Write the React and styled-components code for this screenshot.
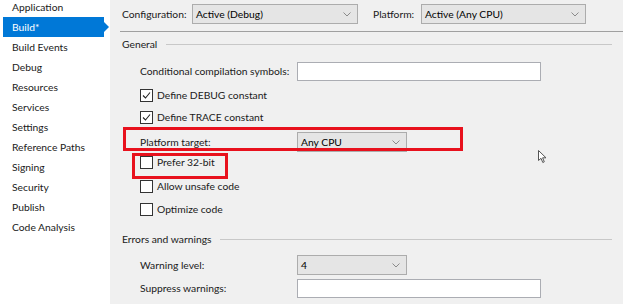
import React from 'react'
import styled, { createGlobalStyle } from 'styled-components'

const GlobalStyle = createGlobalStyle`
  html, body {
    margin: 0;
    padding: 0;
    background: #f0f0f0;
  }
  body {
    font-family: Lato, "Liberation Sans", sans-serif;
    font-size: 10.3px;
    color: #1a1a1a;
  }
`

const Window = styled.div`
  position: relative;
  display: flex;
  width: 623px;
  height: 304px;
  overflow: hidden;
  background: #f0f0f0;
`

const Sidebar = styled.nav`
  width: 110px;
  flex-shrink: 0;
  background: #ffffff;
  display: flex;
  flex-direction: column;
  margin-top: -3px;
`

const NavItem = styled.div`
  position: relative;
  height: 20px;
  display: flex;
  align-items: center;
  padding-left: ${ p => p.$active ? '9px' : '12px' };
  margin-left: ${ p => p.$active ? '3px' : '0' };
  width: ${ p => p.$active ? '92px' : 'auto' };
  background: ${ p => p.$active ? '#0078d7' : 'transparent' };
  color: ${ p => p.$active ? '#ffffff' : '#1a1a1a' };
  white-space: nowrap;

  &::after {
    content: '';
    display: ${ p => p.$active ? 'block' : 'none' };
    position: absolute;
    right: -5px;
    top: 5px;
    border-top: 5px solid transparent;
    border-bottom: 5px solid transparent;
    border-left: 5px solid #0078d7;
  }
`

const Panel = styled.main`
  flex: 1;
  display: flex;
  flex-direction: column;
  padding-left: 10px;
`

const TopBar = styled.div`
  height: 32px;
  display: flex;
  align-items: flex-start;
  padding: 4px 0 0 2px;
  box-sizing: border-box;
  border-bottom: 1px solid #a0a0a0;
  gap: 7px;
`

const TopLabel = styled.span`
  width: ${ p => p.$width };
  height: 20px;
  display: flex;
  align-items: center;
  white-space: nowrap;
  margin-left: ${ p => p.$offset || 0 };
`

const Select = styled.div`
  width: ${ p => p.$width };
  height: 20px;
  box-sizing: border-box;
  display: flex;
  align-items: center;
  justify-content: space-between;
  padding: 0 6px 0 3px;
  background: #e5e5e5;
  border: 1px solid #acacac;
  color: #000;
  flex-shrink: 0;
`

const Input = styled.div`
  width: 244px;
  height: 19px;
  box-sizing: border-box;
  background: #ffffff;
  border: 1px solid #abadb3;
`

const GroupHeader = styled.div`
  height: 22px;
  display: flex;
  align-items: center;
  padding-left: 2px;
  margin-top: ${ p => p.$gap || 0 };
  margin-right: 11px;
  gap: 9px;
  white-space: nowrap;

  &::after {
    content: '';
    flex: 1;
    height: 1px;
    background: #c8c8c8;
  }
`

const Row = styled.div`
  height: 20px;
  display: flex;
  align-items: center;
  padding-left: 20px;
  white-space: nowrap;
  margin-top: ${ p => p.$gap || 0 };
`

const FieldLabel = styled.span`
  width: 157px;
  flex-shrink: 0;
`

const CheckBox = styled.span`
  width: 11px;
  height: 11px;
  border: 1px solid #333;
  background: #fff;
  display: flex;
  align-items: center;
  justify-content: center;
  margin-right: 4px;
`

const Highlight = styled.div`
  position: absolute;
  left: ${ p => p.$x }px;
  top: ${ p => p.$y }px;
  width: ${ p => p.$w }px;
  height: ${ p => p.$h }px;
  box-sizing: border-box;
  border: 3px solid #e8111d;
  pointer-events: none;
`

const Cursor = styled.svg`
  position: absolute;
  left: 538px;
  top: 150px;
`

const Chevron = () => (
  <svg width="8" height="5" viewBox="0 0 8 5">
    <polyline points="0.5,0.5 4,4 7.5,0.5" fill="none" stroke="#8a8a8a" strokeWidth="1" />
  </svg>
)

const Check = () => (
  <svg width="9" height="9" viewBox="0 0 9 9">
    <polyline points="1,4.5 3.5,7 8,1.5" fill="none" stroke="#222" strokeWidth="1.1" />
  </svg>
)

const Option = ({ checked, children, gap }) => (
  <Row $gap={ gap }>
    <CheckBox>{ checked && <Check /> }</CheckBox>
    { children }
  </Row>
)

const pages = [
  'Application', 'Build*', 'Build Events', 'Debug', 'Resources', 'Services',
  'Settings', 'Reference Paths', 'Signing', 'Security', 'Publish', 'Code Analysis'
]

const App = () => (
  <Window>
    <GlobalStyle />
    <Sidebar>
      { pages.map(page => (
        <NavItem key={ page } $active={ page === 'Build*' }>{ page }</NavItem>
      )) }
    </Sidebar>
    <Panel>
      <TopBar>
        <TopLabel $width="63px">Configuration:</TopLabel>
        <Select $width="166px">Active (Debug)<Chevron /></Select>
        <TopLabel $width="41px" $offset="8px">Platform:</TopLabel>
        <Select $width="165px">Active (Any CPU)<Chevron /></Select>
      </TopBar>

      <GroupHeader $gap="1px">General</GroupHeader>
      <Row $gap="6px">
        <FieldLabel>Conditional compilation symbols:</FieldLabel>
        <Input />
      </Row>
      <Option checked gap="4px">Define DEBUG constant</Option>
      <Option checked gap="2px">Define TRACE constant</Option>
      <Row $gap="5px">
        <FieldLabel>Platform target:</FieldLabel>
        <Select $width="110px">Any CPU<Chevron /></Select>
      </Row>
      <Option gap="0px">Prefer 32-bit</Option>
      <Option gap="4px">Allow unsafe code</Option>
      <Option gap="3px">Optimize code</Option>

      <GroupHeader $gap="9px">Errors and warnings</GroupHeader>
      <Row $gap="5px">
        <FieldLabel>Warning level:</FieldLabel>
        <Select $width="110px">4<Chevron /></Select>
      </Row>
      <Row $gap="3px">
        <FieldLabel>Suppress warnings:</FieldLabel>
        <Input />
      </Row>
    </Panel>

    <Highlight $x={ 123 } $y={ 127 } $w={ 340 } $h={ 24 } />
    <Highlight $x={ 132 } $y={ 153 } $w={ 96 } $h={ 26 } />

    <Cursor width="10" height="14" viewBox="0 0 10 14">
      <path d="M0.5,0.5 L0.5,10.5 L3,8.3 L4.8,12.5 L6.3,11.8 L4.6,7.8 L8,7.8 Z" fill="#fff" stroke="#555" strokeWidth="1" />
    </Cursor>
  </Window>
)

export default App
